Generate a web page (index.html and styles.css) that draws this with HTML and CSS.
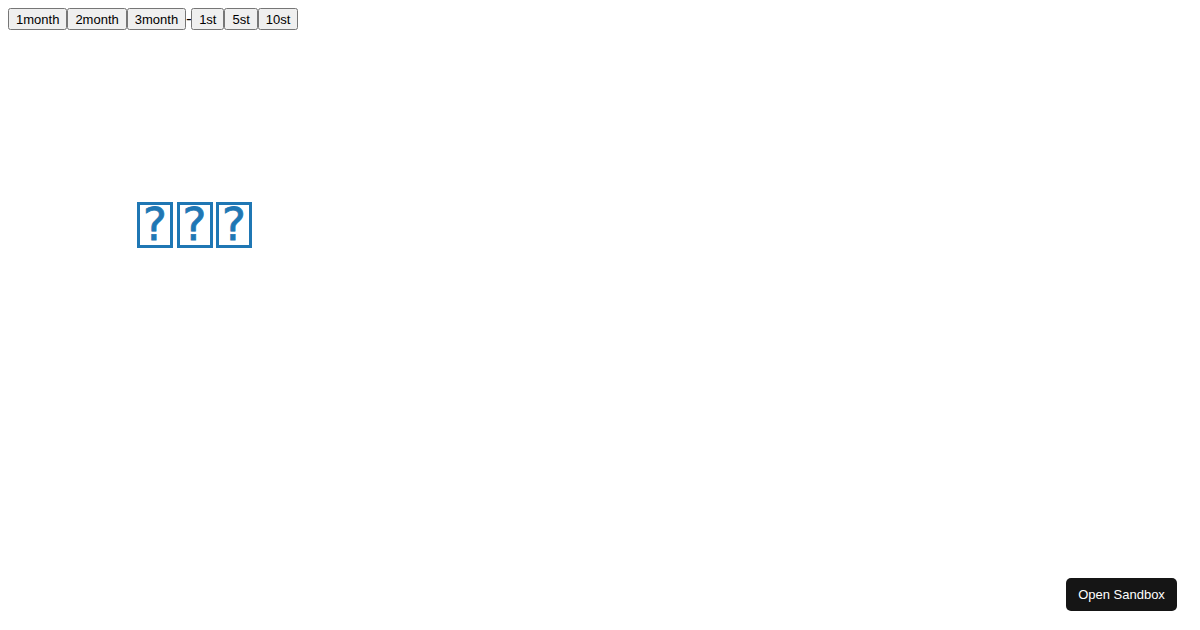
FILE: index.html
```html
<!DOCTYPE html>
<html>
<head>
<meta charset="utf-8">
<link rel="stylesheet" href="styles.css">
</head>
<body>
<div class="controls"><button class="btn">1month</button><button class="btn">2month</button><button class="btn">3month</button><span class="sep">-</span><button class="btn">1st</button><button class="btn">5st</button><button class="btn">10st</button></div>
<div class="chart">
  <span class="tofu">?</span><span class="tofu">?</span><span class="tofu">?</span>
</div>
<button class="sandbox">Open Sandbox</button>
</body>
</html>
```
FILE: styles.css
```css
html, body { margin: 0; padding: 0; background: #fff; }
body { margin: 8px; font-family: "Liberation Serif", serif; font-size: 16px; }
.controls { display: flex; align-items: center; height: 22px; }
.btn {
  font-family: "Liberation Sans", Arial, sans-serif;
  font-size: 13px;
  margin: 0;
  height: 22px;
}
.sep { font-family: "Liberation Serif", serif; font-size: 16px; width: 5px; }
.chart { display: flex; gap: 3.5px; padding: 172px 0 0 129px; }
.tofu {
  box-sizing: border-box;
  width: 36px;
  height: 46px;
  border: 3px solid #1f77b4;
  color: #1f77b4;
  font-family: "DejaVu Sans", sans-serif;
  font-size: 45px;
  line-height: 40px;
  display: flex; align-items: center; justify-content: center;
  -webkit-text-stroke: 0.8px #1f77b4;
}
.sandbox {
  position: fixed;
  right: 23px;
  bottom: 19px;
  width: 111px;
  height: 33px;
  background: #151515;
  color: #fff;
  border: none;
  border-radius: 5px;
  font-family: "Liberation Sans", Arial, sans-serif;
  font-size: 13px;
  padding: 0;
}
```
